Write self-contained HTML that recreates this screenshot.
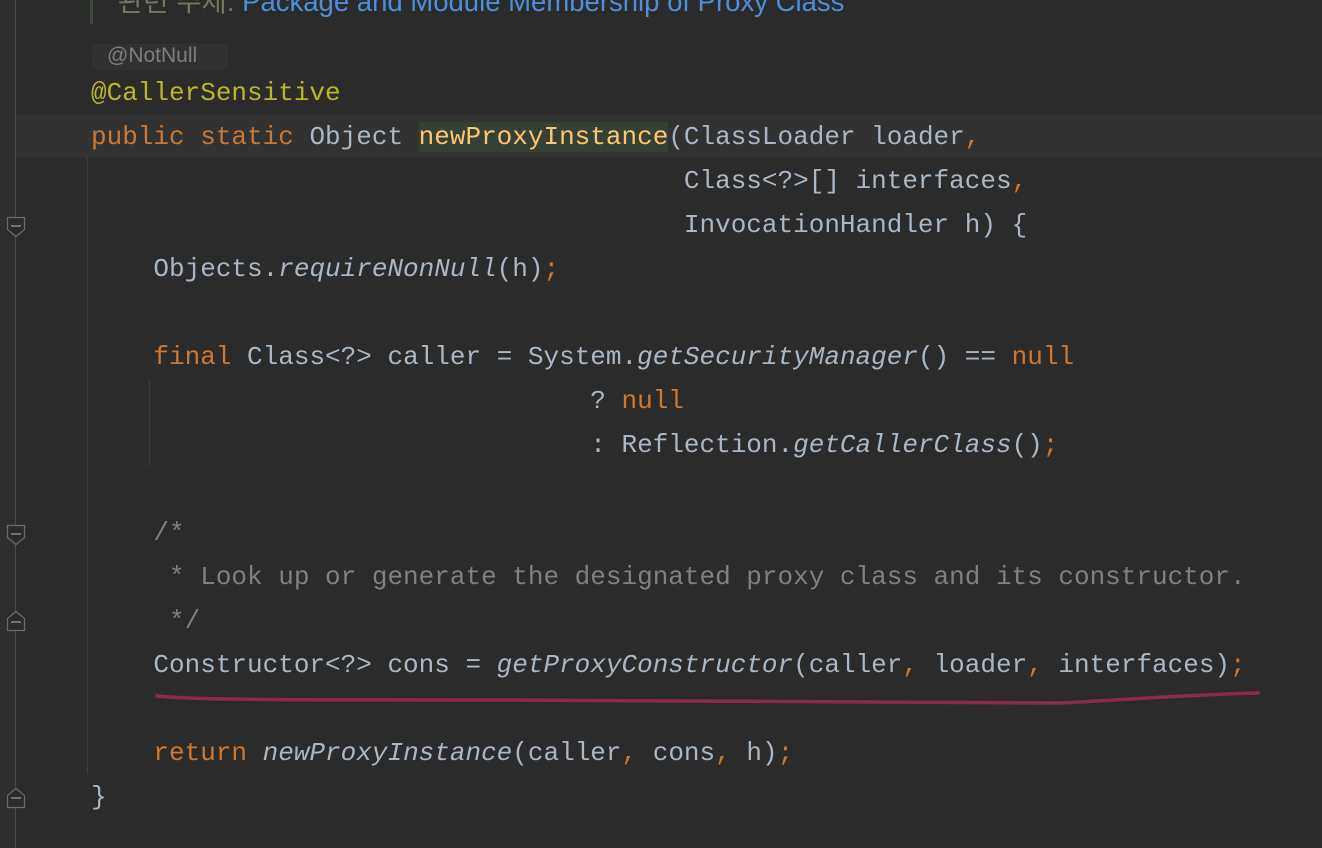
<!DOCTYPE html>
<html><head><meta charset="utf-8"><style>
html,body{margin:0;padding:0}
body{width:1322px;height:848px;background:#2b2b2b;position:relative;overflow:hidden;font-family:"Liberation Mono",monospace;font-size:26px;}
.gut{position:absolute;left:0;top:0;width:16px;height:848px;background:#2e2e2e}
.gl{position:absolute;left:15px;top:0;width:1px;height:848px;background:#4a4a4a}
.ln{position:absolute;left:91px;height:44px;line-height:44px;white-space:pre;color:#a9b7c6}
.k{color:#cc7832}.a{color:#bbb529}.m{color:#ffc66d;background:#344134}.c{color:#808080}.i{font-style:italic}
.cur{position:absolute;left:16px;top:114px;width:1306px;height:44px;background:#323232}
.guide{position:absolute;width:1px;background:#3c3c3c}
</style></head><body>
<div class="gut"></div><div class="gl"></div>
<div class="cur"></div>
<div style="position:absolute;left:90px;top:0;width:3px;height:24px;background:#3d4a3a"></div>
<div style="position:absolute;left:118px;top:-14px;font-family:'Liberation Sans','Noto Sans CJK KR',sans-serif;font-size:27.5px;line-height:32px;color:#6f7a5f;white-space:pre">관련 주제: <span style="color:#4e8fd8">Package and Module Membership of Proxy Class</span></div>
<div style="position:absolute;left:92px;top:44px;width:136px;height:26px;background:#313131;border-radius:6px"></div>
<div style="position:absolute;left:107px;top:42px;font-family:'Liberation Sans',sans-serif;font-size:21px;line-height:28px;color:#7a7e82">@NotNull</div>
<div class="guide" style="left:87px;top:158px;height:616px"></div>
<div class="guide" style="left:149px;top:380px;height:86px"></div>
<svg style="position:absolute;left:0;top:0" width="40" height="848">
<g fill="#2b2b2b" stroke="#6a6a6a" stroke-width="1.3">
<path d="M7.5 217.5h17v12l-8.5 7-8.5-7z"/><path d="M7.5 525.5h17v12l-8.5 7-8.5-7z"/>
<path d="M7.5 630.5h17v-12l-8.5-7-8.5 7z"/><path d="M7.5 807.5h17v-12l-8.5-7-8.5 7z"/>
</g><g stroke="#8a8a8a" stroke-width="1.5"><path d="M11 226h10M11 534h10M11 622h10M11 798h10"/></g></svg>
<div class="ln a" style="top:71px">@CallerSensitive</div>
<div class="ln" style="top:115px"><span class="k">public static </span>Object <span class="m">newProxyInstance</span>(ClassLoader loader<span class="k">,</span></div>
<div class="ln" style="top:159px">                                      Class&lt;?&gt;[] interfaces<span class="k">,</span></div>
<div class="ln" style="top:203px">                                      InvocationHandler h) {</div>
<div class="ln" style="top:247px">    Objects.<span class="i">requireNonNull</span>(h)<span class="k">;</span></div>
<div class="ln" style="top:335px">    <span class="k">final </span>Class&lt;?&gt; caller = System.<span class="i">getSecurityManager</span>() == <span class="k">null</span></div>
<div class="ln" style="top:379px">                                ? <span class="k">null</span></div>
<div class="ln" style="top:423px">                                : Reflection.<span class="i">getCallerClass</span>()<span class="k">;</span></div>
<div class="ln c" style="top:511px">    /*</div>
<div class="ln c" style="top:555px">     * Look up or generate the designated proxy class and its constructor.</div>
<div class="ln c" style="top:599px">     */</div>
<div class="ln" style="top:643px">    Constructor&lt;?&gt; cons = <span class="i">getProxyConstructor</span>(caller<span class="k">, </span>loader<span class="k">, </span>interfaces)<span class="k">;</span></div>
<div class="ln" style="top:731px">    <span class="k">return </span><span class="i">newProxyInstance</span>(caller<span class="k">, </span>cons<span class="k">, </span>h)<span class="k">;</span></div>
<div class="ln" style="top:775px">}</div>
<svg style="position:absolute;left:0;top:0" width="1322" height="848"><path d="M157 696 C190 700 300 700 500 700 C700 700 900 702 1060 703 C1120 700 1180 695 1258 693" fill="none" stroke="#8e2a4c" stroke-width="3.5" stroke-linecap="round"/></svg>
</body></html>
